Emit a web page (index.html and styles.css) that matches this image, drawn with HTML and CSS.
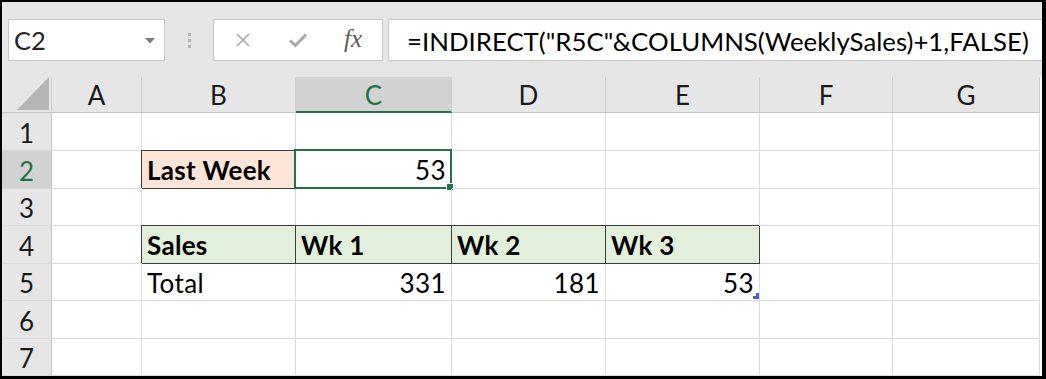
FILE: index.html
```html
<!DOCTYPE html>
<html>
<head>
<meta charset="utf-8">
<link rel="stylesheet" href="styles.css">
</head>
<body>
<div class="window">
  <div class="toolbar">
    <div class="namebox">
      <span class="name">C2</span>
      <svg class="dropdown" width="10" height="6" viewBox="0 0 10 6"><polygon points="0,0 10,0 5,5.5" fill="#7a7a7a"/></svg>
    </div>
    <div class="grip"><i></i><i></i><i></i></div>
    <div class="fbuttons">
      <svg class="ico" width="16" height="16" viewBox="0 0 16 16"><path d="M2 2 L14 14 M14 2 L2 14" stroke="#a8a8a8" stroke-width="1.6" fill="none"/></svg>
      <svg class="ico" width="20" height="16" viewBox="0 0 20 16"><path d="M2 8.5 L7.5 13.5 L18 2.5" stroke="#a8a8a8" stroke-width="3" fill="none"/></svg>
      <span class="fx">fx</span>
    </div>
    <div class="formula">=INDIRECT("R5C"&amp;COLUMNS(WeeklySales)+1,FALSE)</div>
  </div>
  <div class="sheet">
    <div class="hd corner"><svg width="32" height="33" viewBox="0 0 32 33"><polygon points="0,33 32,33 32,0" fill="#b5b5b5"/></svg></div>
    <div class="hd col">A</div>
    <div class="hd col">B</div>
    <div class="hd col sel-col">C</div>
    <div class="hd col">D</div>
    <div class="hd col">E</div>
    <div class="hd col">F</div>
    <div class="hd col">G</div>

    <div class="hd row">1</div>
    <div class="c"></div><div class="c"></div><div class="c"></div><div class="c"></div><div class="c"></div><div class="c"></div><div class="c"></div>

    <div class="hd row sel-row">2</div>
    <div class="c"></div>
    <div class="c boxed peach bold">Last Week</div>
    <div class="c num active">53<span class="selbox"><span class="handle"></span></span></div>
    <div class="c"></div><div class="c"></div><div class="c"></div><div class="c"></div>

    <div class="hd row">3</div>
    <div class="c"></div><div class="c"></div><div class="c"></div><div class="c"></div><div class="c"></div><div class="c"></div><div class="c"></div>

    <div class="hd row">4</div>
    <div class="c"></div>
    <div class="c boxed green bold">Sales</div>
    <div class="c boxed green bold">Wk 1</div>
    <div class="c boxed green bold">Wk 2</div>
    <div class="c boxed green bold">Wk 3</div>
    <div class="c"></div><div class="c"></div>

    <div class="hd row">5</div>
    <div class="c"></div>
    <div class="c">Total</div>
    <div class="c num">331</div>
    <div class="c num">181</div>
    <div class="c num">53<span class="mark"></span></div>
    <div class="c"></div><div class="c"></div>

    <div class="hd row">6</div>
    <div class="c"></div><div class="c"></div><div class="c"></div><div class="c"></div><div class="c"></div><div class="c"></div><div class="c"></div>

    <div class="hd row">7</div>
    <div class="c"></div><div class="c"></div><div class="c"></div><div class="c"></div><div class="c"></div><div class="c"></div><div class="c"></div>
  </div>
</div>
</body>
</html>
```

FILE: styles.css
```css
* { box-sizing: border-box; }
html, body { margin: 0; padding: 0; background: #fff; }
body { font-family: Lato, "Liberation Sans", sans-serif; }

.window {
  width: 1046px;
  height: 379px;
  border-style: solid;
  border-color: #000;
  border-width: 2px 4px 3px 2px;
  background: #fff;
  overflow: hidden;
}

.toolbar {
  height: 75px;
  background: #e6e6e6;
  display: flex;
  align-items: flex-start;
  padding-top: 17px;
  padding-left: 6px;
}

.namebox {
  width: 157px;
  height: 42px;
  background: #fff;
  border: 1px solid #c6c6c6;
  display: flex;
  align-items: center;
  justify-content: space-between;
  padding: 0 9px 0 5px;
  font-size: 25.5px;
  color: #262626;
}
.dropdown { margin-top: 1px; }

.grip {
  width: 48px;
  height: 42px;
  display: flex;
  flex-direction: column;
  align-items: center;
  justify-content: center;
  gap: 3px;
}
.grip i {
  display: block;
  width: 3px;
  height: 3px;
  background: #b3b3b3;
}

.fbuttons {
  width: 170px;
  height: 42px;
  background: #fff;
  border: 1px solid #c6c6c6;
  display: flex;
  align-items: center;
  padding-left: 21px;
}
.fbuttons .ico:first-child { margin-right: 37px; }
.fbuttons .ico:nth-child(2) { margin-right: 36px; }
.fx {
  font-family: "Liberation Serif", serif;
  font-style: italic;
  font-size: 25px;
  color: #5a5a5a;
  margin-top: -2px;
}

.formula {
  flex: 1;
  height: 42px;
  margin-left: 5px;
  background: #fff;
  border: 1px solid #c6c6c6;
  border-right: none;
  font-size: 25.8px;
  line-height: 42px;
  padding-left: 18px;
  color: #000;
  white-space: nowrap;
}

.sheet {
  display: grid;
  grid-template-columns: 50px 90px 154px 156px 154px 154px 133px 147px;
  grid-template-rows: 36px 38px 38px 37px 38px 37px 38px 37px;
  font-size: 26px;
  color: #000;
}

.hd {
  background: #e6e6e6;
  border-right: 1px solid #cdcdcd;
  border-bottom: 1px solid #c4c4c4;
  display: flex;
  align-items: center;
  justify-content: center;
  color: #1a1a1a;
  padding-top: 1px;
}
.hd.row { border-right: 1px solid #c4c4c4; border-bottom: 1px solid #d8d8d8; padding-top: 2px; }
.corner { justify-content: flex-end; align-items: flex-end; padding: 0 2px 2px 0; }
.sel-col {
  background: #d2d2d2;
  color: #217346;
  border-bottom: 2px solid #217346;
}
.sel-row {
  background: #d2d2d2;
  color: #217346;
  border-right: 2px solid #217346;
}

.c {
  position: relative;
  border-right: 1px solid #dadada;
  border-bottom: 1px solid #dadada;
  line-height: 37px;
  padding: 1px 5px 0 5px;
  white-space: nowrap;
  letter-spacing: 0.4px;
}
.num { text-align: right; padding-right: 5px; }
.bold { font-weight: 700; letter-spacing: 0.3px; }
.boxed {
  border-right: 1px solid #3c3c3c;
  border-bottom: 1px solid #3c3c3c;
  box-shadow: -1px -1px 0 #3c3c3c;
}
.peach { background: #fce4d6; }
.green { background: #e2efda; }

.selbox {
  position: absolute;
  left: -2px;
  top: -2px;
  right: -1px;
  bottom: -1px;
  border: 2px solid #217346;
}
.handle {
  position: absolute;
  right: -4px;
  bottom: -4px;
  width: 6px;
  height: 6px;
  background: #217346;
  border: 1px solid #fff;
  box-sizing: content-box;
}
.mark {
  position: absolute;
  right: 0;
  bottom: 1px;
  width: 6px;
  height: 6px;
  background: #4b5fc8;
  clip-path: polygon(100% 0, 100% 100%, 0 100%, 0 50%, 50% 50%, 50% 0);
}
```
